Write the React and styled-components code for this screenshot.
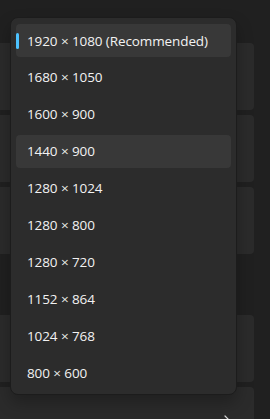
import React from "react";
import styled, { createGlobalStyle } from "styled-components";

const resolutions = [
  "1920 × 1080 (Recommended)",
  "1680 × 1050",
  "1600 × 900",
  "1440 × 900",
  "1280 × 1024",
  "1280 × 800",
  "1280 × 720",
  "1152 × 864",
  "1024 × 768",
  "800 × 600",
];

const GlobalStyle = createGlobalStyle`
  html, body {
    margin: 0;
    padding: 0;
    background: #202020;
    overflow: hidden;
  }
  body {
    font-family: "Open Sans", "Noto Sans", "Liberation Sans", sans-serif;
    -webkit-font-smoothing: antialiased;
  }
`;

const Page = styled.div`
  position: relative;
  width: 270px;
  height: 419px;
  padding-top: 43px;
  box-sizing: border-box;
  overflow: hidden;
`;

const Group = styled.div`
  display: flex;
  flex-direction: column;
  gap: 5px;
  margin-bottom: ${(p) => p.spacing || 0}px;
`;

const Card = styled.div`
  display: flex;
  align-items: center;
  justify-content: flex-end;
  height: 67px;
  width: 264px;
  margin-left: -10px;
  padding-right: 22px;
  box-sizing: border-box;
  background: #2b2b2b;
  border-radius: 4px;
  color: #d0d0d0;
`;

const Menu = styled.div`
  position: absolute;
  left: 10px;
  top: 17px;
  width: 227px;
  height: 378px;
  box-sizing: border-box;
  padding: 6px 5px;
  display: flex;
  flex-direction: column;
  gap: 3.9px;
  background: #2c2c2c;
  border: 1px solid #1c1c1c;
  border-radius: 8px;
  box-shadow: 0 8px 16px rgba(0, 0, 0, 0.26);
`;

const Item = styled.div`
  position: relative;
  display: flex;
  align-items: center;
  height: 33px;
  flex-shrink: 0;
  padding-left: 11px;
  border-radius: 4px;
  background: ${(p) => (p.active ? "#383838" : "transparent")};
  color: #f2f2f2;
  font-size: 13.5px;
  letter-spacing: -0.1px;
`;

const Accent = styled.span`
  position: absolute;
  left: 0;
  top: 8.5px;
  width: 3px;
  height: 16px;
  border-radius: 2px;
  background: #4cc2ff;
`;

const Chevron = () => (
  <svg width="10" height="14" viewBox="0 0 10 14" fill="none">
    <path d="M3 2 L8 7 L3 12" stroke="#d8d8d8" strokeWidth="1.2" strokeLinecap="round" strokeLinejoin="round" />
  </svg>
);

export default function App() {
  return (
    <>
      <GlobalStyle />
      <Page>
        <Group spacing={61}>
          <Card />
          <Card />
          <Card />
        </Group>
        <Group>
          <Card />
          <Card>
            <Chevron />
          </Card>
        </Group>
        <Menu>
          {resolutions.map((r, i) => (
            <Item key={r} active={i === 0 || i === 3}>
              {i === 0 && <Accent />}
              {r}
            </Item>
          ))}
        </Menu>
      </Page>
    </>
  );
}
